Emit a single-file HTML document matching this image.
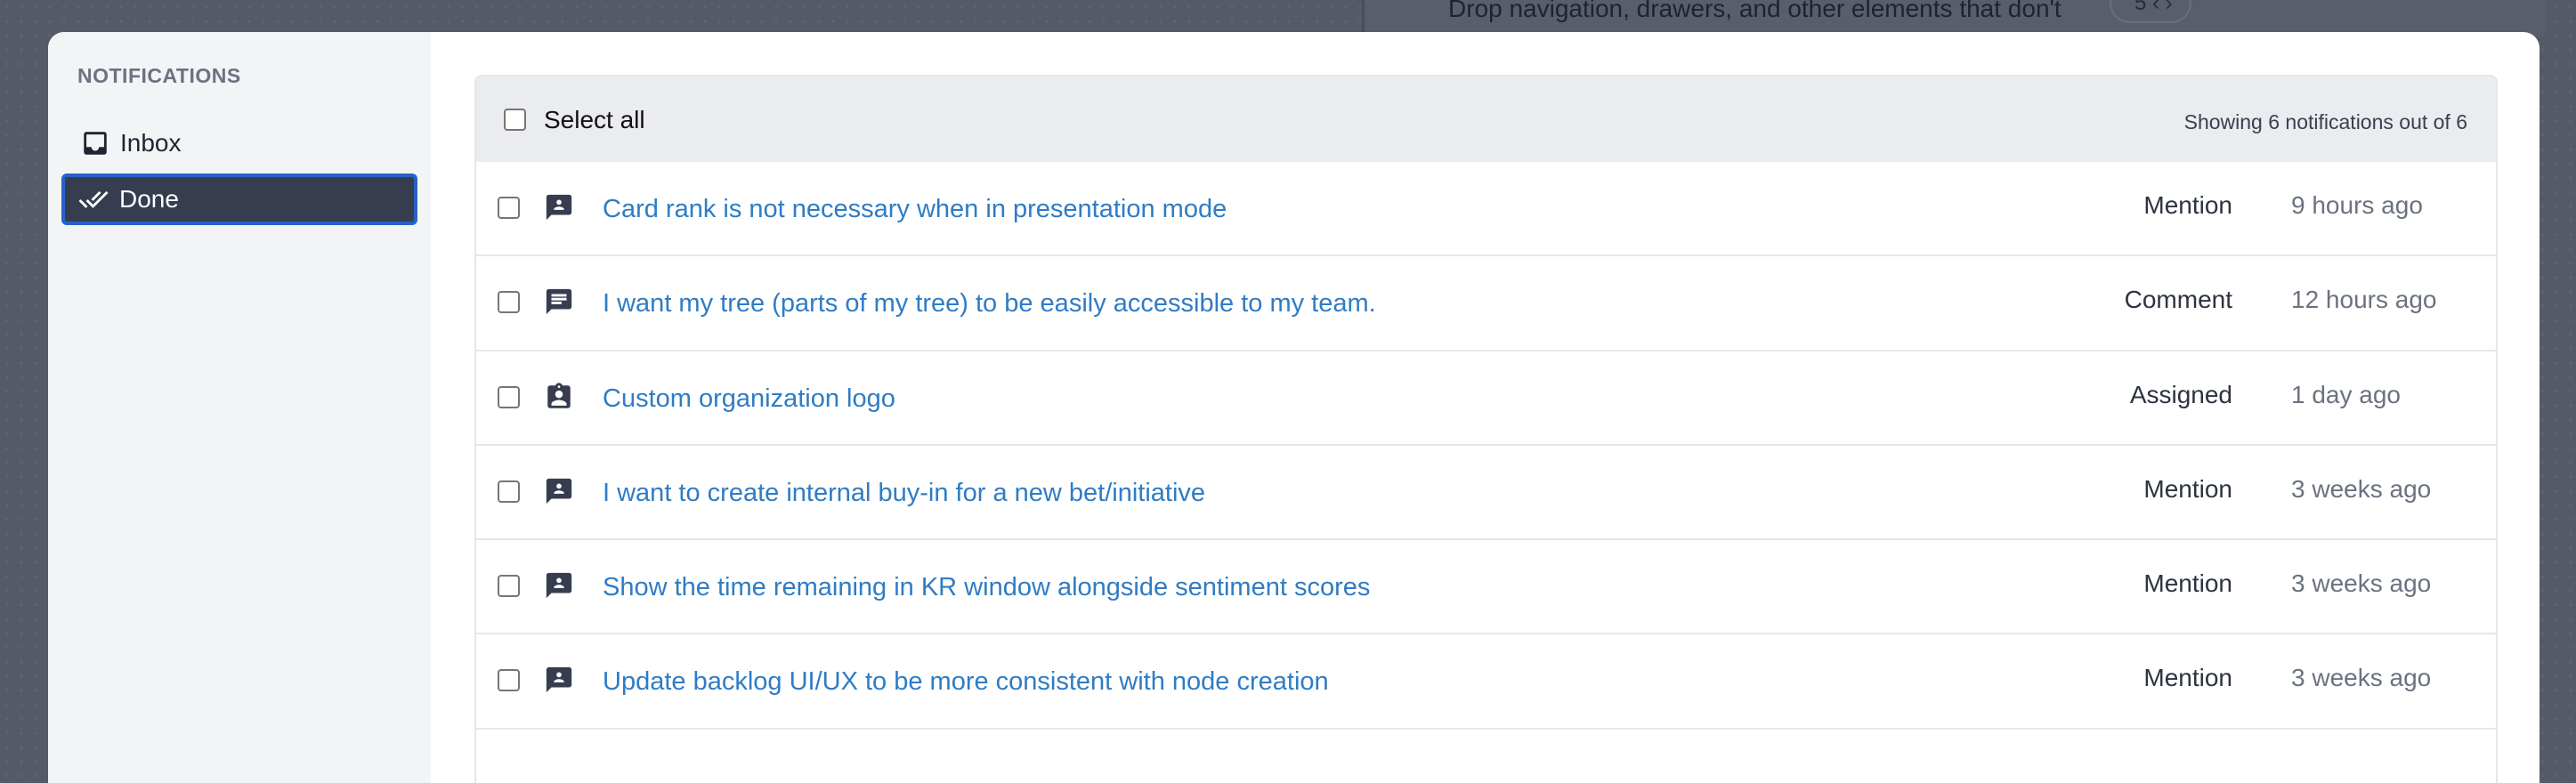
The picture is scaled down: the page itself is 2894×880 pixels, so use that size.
<!DOCTYPE html>
<html style="width:2894px;height:880px;overflow:hidden"><head><meta charset="utf-8"><style>
*{box-sizing:border-box;margin:0;padding:0}
body{width:2894px;height:880px;overflow:hidden;position:relative;font-family:"Liberation Sans",sans-serif;background:#555a66;
background-image:radial-gradient(#60646f 1.5px,transparent 1.6px);background-size:16px 16px}
.bgcard{position:absolute;left:1530px;top:-20px;width:1330px;height:60px;background:#5a5e6a;border-left:3px solid #4a4e59}
.bgtext{position:absolute;left:1627px;top:-14px;font-size:28px;line-height:48px;color:#1f2230;width:760px;height:50px;overflow:hidden}
.pill{position:absolute;left:2370px;top:-20px;width:92px;height:46px;border:2px solid #6a6e79;border-radius:23px;color:#2a2d38;font-size:24px;padding:8px 0 0 26px}
.modal{position:absolute;left:54px;top:36px;width:2799px;height:844px;background:#fff;border-radius:18px 18px 0 0;overflow:hidden}
.side{position:absolute;left:0;top:0;width:430px;height:100%;background:#f3f4f6}
.side h6{position:absolute;left:33px;top:36px;font-size:23px;font-weight:bold;color:#6b7280;letter-spacing:.5px}
.inbox{position:absolute;left:36px;top:108px;font-size:28px;color:#1f2430;display:flex;align-items:center}
.done{position:absolute;left:15px;top:159px;width:400px;height:58px;background:#373d4f;border:4px solid #2563c9;border-radius:6px;color:#fff;font-size:28px;display:flex;align-items:center;padding-left:15px}
.table{position:absolute;left:479px;top:48px;width:2273px;height:820px;border:2px solid #e5e7eb;border-radius:8px 8px 0 0;overflow:hidden}
.head{height:96px;background:#ebecef;position:relative}
.cb{position:absolute;width:25px;height:25px;border:2px solid #767676;border-radius:4px;background:#fff}
.head .sel{position:absolute;left:76px;top:33px;font-size:28px;color:#111}
.head .show{position:absolute;right:32px;top:38px;font-size:23px;color:#374151}
.row{height:106.3px;border-bottom:2px solid #e5e7eb;position:relative}
.row .t{position:absolute;left:142px;top:37px;font-size:29px;color:#2f7cc4}
.row .ty{position:absolute;right:296px;top:33px;font-size:28px;color:#2d3340}
.row .tm{position:absolute;left:2039px;top:33px;font-size:28px;color:#6b7280}
.row svg{position:absolute;left:76px;top:34px}
</style></head><body>
<div class="bgcard"></div>
<div class="bgtext">Drop navigation, drawers, and other elements that don't matter to presenting</div>
<div class="pill">5 ‹ ›</div>
<div class="modal">
 <div class="side">
  <h6>NOTIFICATIONS</h6>
  <div class="inbox"><svg width="34" height="34" viewBox="0 0 24 24"><path fill="#1f2430" d="M19 3H4.99c-1.11 0-1.98.89-1.98 2L3 19c0 1.1.88 2 1.99 2H19c1.1 0 2-.9 2-2V5c0-1.11-.9-2-2-2zm0 12h-4c0 1.66-1.35 3-3 3s-3-1.34-3-3H4.99V5H19v10z"/></svg><span style="margin-left:11px">Inbox</span></div>
  <div class="done"><svg width="34" height="34" viewBox="0 0 24 24"><path fill="#fff" d="M18 7l-1.41-1.41-6.34 6.34 1.41 1.41L18 7zm4.24-1.41L11.66 16.17 7.48 12l-1.41 1.41L11.66 19l12-12-1.42-1.41zM.41 13.41L6 19l1.41-1.41L1.83 12 .41 13.41z"/></svg><span style="margin-left:12px">Done</span></div>
 </div>
 <div class="table">
  <div class="head"><div class="cb" style="left:31px;top:36px"></div><span class="sel">Select all</span><span class="show">Showing 6 notifications out of 6</span></div>
  <div class="row"><div class="cb" style="left:24px;top:39px"></div><svg width="34" height="34" viewBox="0 0 24 24"><path fill="#373d4f" d="M20 2H4c-1.1 0-2 .9-2 2v18l4-4h14c1.1 0 2-.9 2-2V4c0-1.1-.9-2-2-2z"/><circle cx="12" cy="8" r="2" fill="#fff"/><path fill="#fff" d="M8 13.5c0-1.3 2.7-2 4-2s4 .7 4 2V14H8z"/></svg><span class="t">Card rank is not necessary when in presentation mode</span><span class="ty">Mention</span><span class="tm">9 hours ago</span></div>
  <div class="row"><div class="cb" style="left:24px;top:39px"></div><svg width="34" height="34" viewBox="0 0 24 24"><path fill="#373d4f" d="M20 2H4c-1.1 0-2 .9-2 2v18l4-4h14c1.1 0 2-.9 2-2V4c0-1.1-.9-2-2-2zM6 9h12v2H6zm8 5H6v-2h8zm4-6H6V6h12z"/></svg><span class="t">I want my tree (parts of my tree) to be easily accessible to my team.</span><span class="ty">Comment</span><span class="tm">12 hours ago</span></div>
  <div class="row"><div class="cb" style="left:24px;top:39px"></div><svg width="34" height="34" viewBox="0 0 24 24"><path fill="#373d4f" d="M19 3h-4.18C14.4 1.84 13.3 1 12 1c-1.3 0-2.4.84-2.82 2H5c-1.1 0-2 .9-2 2v14c0 1.1.9 2 2 2h14c1.1 0 2-.9 2-2V5c0-1.1-.9-2-2-2zm-7 0c.55 0 1 .45 1 1s-.45 1-1 1-1-.45-1-1 .45-1 1-1zm0 4c1.66 0 3 1.34 3 3s-1.34 3-3 3-3-1.34-3-3 1.34-3 3-3zm6 12H6v-1.4c0-2 4-3.1 6-3.1s6 1.1 6 3.1V19z"/></svg><span class="t">Custom organization logo</span><span class="ty">Assigned</span><span class="tm">1 day ago</span></div>
  <div class="row"><div class="cb" style="left:24px;top:39px"></div><svg width="34" height="34" viewBox="0 0 24 24"><path fill="#373d4f" d="M20 2H4c-1.1 0-2 .9-2 2v18l4-4h14c1.1 0 2-.9 2-2V4c0-1.1-.9-2-2-2z"/><circle cx="12" cy="8" r="2" fill="#fff"/><path fill="#fff" d="M8 13.5c0-1.3 2.7-2 4-2s4 .7 4 2V14H8z"/></svg><span class="t">I want to create internal buy-in for a new bet/initiative</span><span class="ty">Mention</span><span class="tm">3 weeks ago</span></div>
  <div class="row"><div class="cb" style="left:24px;top:39px"></div><svg width="34" height="34" viewBox="0 0 24 24"><path fill="#373d4f" d="M20 2H4c-1.1 0-2 .9-2 2v18l4-4h14c1.1 0 2-.9 2-2V4c0-1.1-.9-2-2-2z"/><circle cx="12" cy="8" r="2" fill="#fff"/><path fill="#fff" d="M8 13.5c0-1.3 2.7-2 4-2s4 .7 4 2V14H8z"/></svg><span class="t">Show the time remaining in KR window alongside sentiment scores</span><span class="ty">Mention</span><span class="tm">3 weeks ago</span></div>
  <div class="row"><div class="cb" style="left:24px;top:39px"></div><svg width="34" height="34" viewBox="0 0 24 24"><path fill="#373d4f" d="M20 2H4c-1.1 0-2 .9-2 2v18l4-4h14c1.1 0 2-.9 2-2V4c0-1.1-.9-2-2-2z"/><circle cx="12" cy="8" r="2" fill="#fff"/><path fill="#fff" d="M8 13.5c0-1.3 2.7-2 4-2s4 .7 4 2V14H8z"/></svg><span class="t">Update backlog UI/UX to be more consistent with node creation</span><span class="ty">Mention</span><span class="tm">3 weeks ago</span></div>
 </div>
</div>
</body></html>
